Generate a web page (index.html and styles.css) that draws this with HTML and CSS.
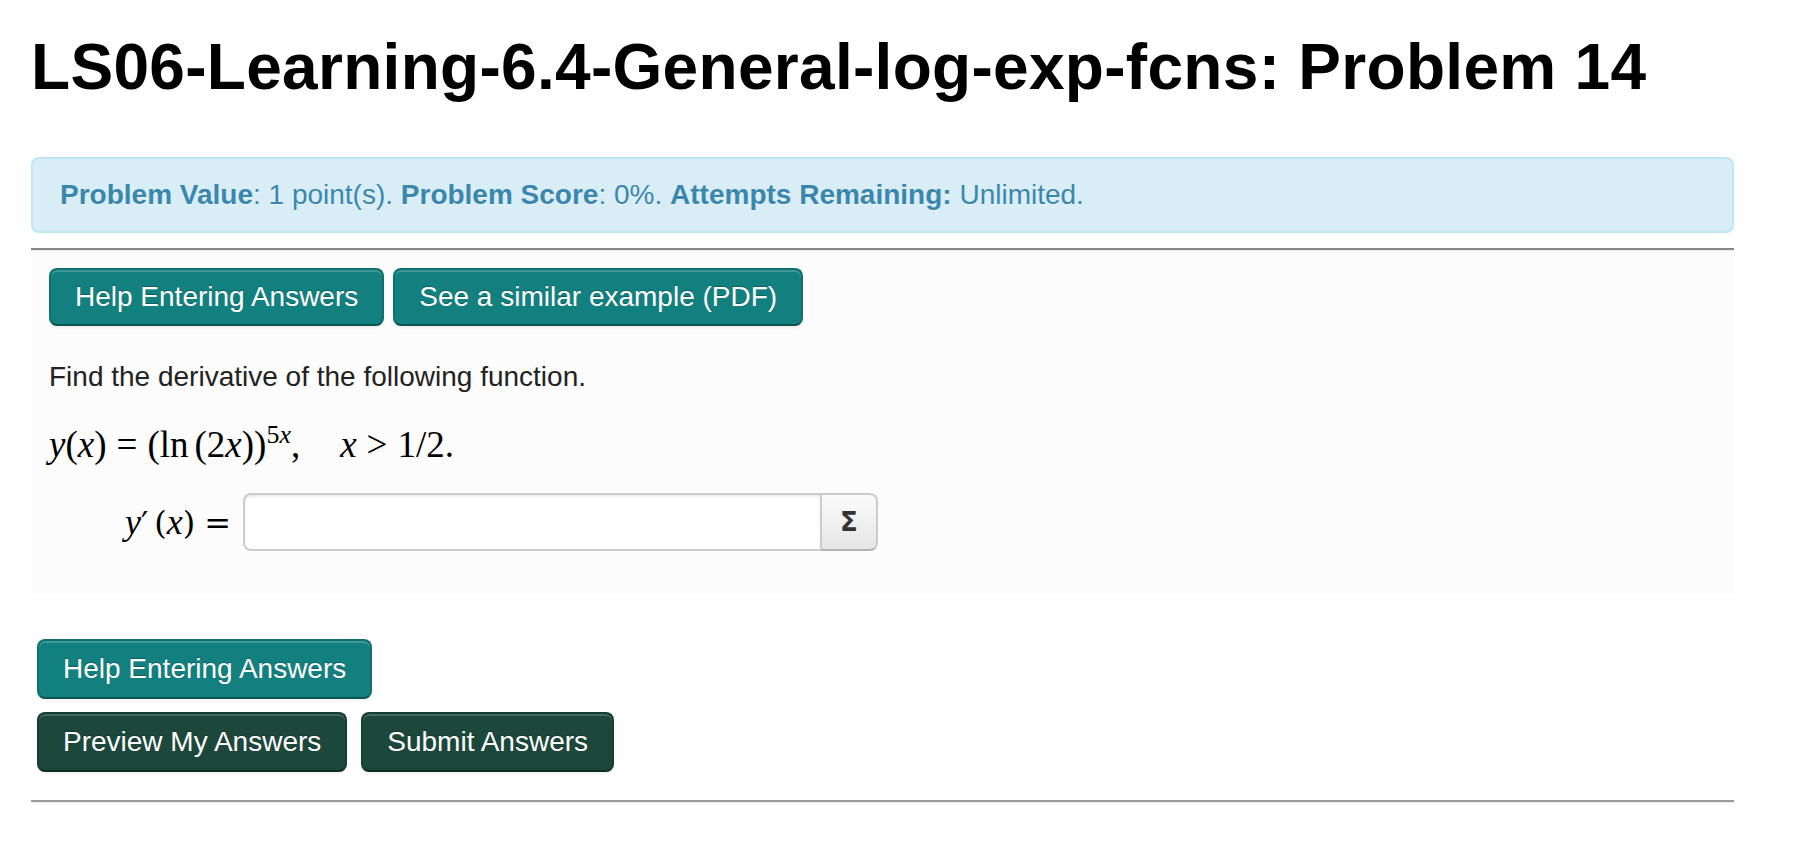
FILE: index.html
```html
<!DOCTYPE html>
<html lang="en">
<head>
<meta charset="utf-8">
<title>LS06-Learning-6.4-General-log-exp-fcns: Problem 14</title>
<link rel="stylesheet" href="styles.css">
</head>
<body>
<div class="page">
  <h1 class="title">LS06-Learning-6.4-General-log-exp-fcns: Problem 14</h1>
  <div class="alert">
    <b>Problem Value</b>: 1 point(s). <b>Problem Score</b>: 0%. <b>Attempts Remaining:</b> Unlimited.
  </div>
  <hr class="rule">
  <div class="problem">
    <div class="btn-row">
      <button class="btn btn-teal">Help Entering Answers</button>
      <button class="btn btn-teal">See a similar example (PDF)</button>
    </div>
    <p class="text">Find the derivative of the following function.</p>
    <p class="math"><span class="mi">y</span>(<span class="mi">x</span>)<span class="rel">=</span>(ln<span class="thin"></span>(2<span class="mi">x</span>))<sup class="sup">5<span class="mi">x</span></sup>,<span class="quad"></span><span class="mi">x</span><span class="rel">&gt;</span>1/2.</p>
    <div class="answer-row">
      <span class="label"><span class="mi">y</span>′<span class="thin"></span>(<span class="mi">x</span>)<span class="rel2">=</span></span>
      <div class="answer">
        <input class="answer-input" type="text" aria-label="answer">
        <button class="sigma" aria-label="equation editor">Σ</button>
      </div>
    </div>
  </div>
  <div class="submit-area">
    <div class="btn-row">
      <button class="btn btn-teal tall">Help Entering Answers</button>
    </div>
    <div class="btn-row second">
      <button class="btn btn-dark tall">Preview My Answers</button>
      <button class="btn btn-dark tall">Submit Answers</button>
    </div>
  </div>
  <hr class="rule bottom">
</div>
</body>
</html>
```
FILE: styles.css
```css
html, body {
  margin: 0;
  padding: 0;
  background: #ffffff;
}
body {
  font-family: "Liberation Sans", Arial, Helvetica, sans-serif;
  font-size: 28px;
  line-height: 40px;
  color: #222222;
}
.page {
  width: 1703px;
  margin-left: 31px;
  padding-top: 32px;
}
.title {
  margin: 0 0 55px 0;
  font-size: 64px;
  line-height: 70px;
  font-weight: bold;
  color: #000000;
  letter-spacing: 0.3px;
}
.alert {
  border: 2px solid #bce8f1;
  background: #d9edf7;
  color: #3a87ad;
  border-radius: 8px;
  padding: 16px 27px 16px 27px;
  text-shadow: 0 1px 0 rgba(255,255,255,0.5);
}
.alert b { font-weight: bold; }
.rule {
  margin: 15px 0 0 0;
  height: 0;
  border: 0;
  border-top: 2px solid #878787;
  border-bottom: 1px solid #eeeeee;
}
.problem {
  background: #fcfcfc;
  padding: 17px 18px 43px 18px;
}
.btn-row {
  display: flex;
  gap: 9px;
}
.btn {
  font-family: "Liberation Sans", Arial, Helvetica, sans-serif;
  font-size: 28px;
  line-height: 40px;
  padding: 7px 24px;
  border-radius: 8px;
  color: #ffffff;
  text-shadow: 0 -1px 0 rgba(0,0,0,0.25);
  cursor: pointer;
}
.btn.tall {
  padding-top: 8px;
  padding-bottom: 8px;
}
.btn-teal {
  background: #12807e;
  border: 2px solid #0f706e;
  border-bottom-color: #0a5453;
  box-shadow: inset 0 2px 0 rgba(255,255,255,0.2), 0 2px 3px rgba(0,0,0,0.06);
}
.btn-dark {
  background: #1c473b;
  border: 2px solid #173c32;
  border-bottom-color: #102b23;
  box-shadow: inset 0 2px 0 rgba(255,255,255,0.18), 0 2px 3px rgba(0,0,0,0.06);
}
.text {
  margin: 31px 0 0 0;
}
.math {
  margin: 28px 0 0 0;
  font-family: "Liberation Serif", "Times New Roman", serif;
  font-size: 37px;
  line-height: 40px;
  color: #000000;
}
.mi { font-style: italic; }
.rel { margin: 0 10px; }
.rel2 { margin-left: 9px; }
.thin { display: inline-block; width: 6px; }
.quad { display: inline-block; width: 40px; }
.sup {
  font-size: 0.7em;
  line-height: 0;
  vertical-align: 0.55em;
}
.answer-row {
  margin-top: 28px;
  display: flex;
  align-items: center;
  padding-left: 76px;
}
.label {
  font-family: "DejaVu Serif", "Liberation Serif", serif;
  font-size: 32px;
  color: #000000;
  width: 118px;
  white-space: nowrap;
}
.label .mi { font-family: "Liberation Serif", serif; font-size: 36px; }
.answer {
  display: flex;
  height: 58px;
}
.answer-input {
  width: 577px;
  height: 58px;
  box-sizing: border-box;
  border: 2px solid #cccccc;
  border-right: 0;
  border-radius: 8px 0 0 8px;
  box-shadow: inset 0 2px 2px rgba(0,0,0,0.075);
  background: #ffffff;
  margin: 0;
  padding: 0 12px;
  font-size: 28px;
}
.sigma {
  width: 58px;
  height: 58px;
  box-sizing: border-box;
  border: 2px solid #cccccc;
  border-bottom-color: #b3b3b3;
  border-radius: 0 8px 8px 0;
  background: linear-gradient(#fbfbfb, #e6e6e6);
  color: #333333;
  font-family: "DejaVu Sans", sans-serif;
  font-weight: bold;
  font-size: 26px;
  padding: 0;
  margin: 0;
}
.submit-area {
  padding: 45px 0 0 6px;
}
.second {
  margin-top: 13px;
  gap: 14px;
}
.rule.bottom {
  margin-top: 28px;
  border-top-color: #9a9a9a;
}
```
